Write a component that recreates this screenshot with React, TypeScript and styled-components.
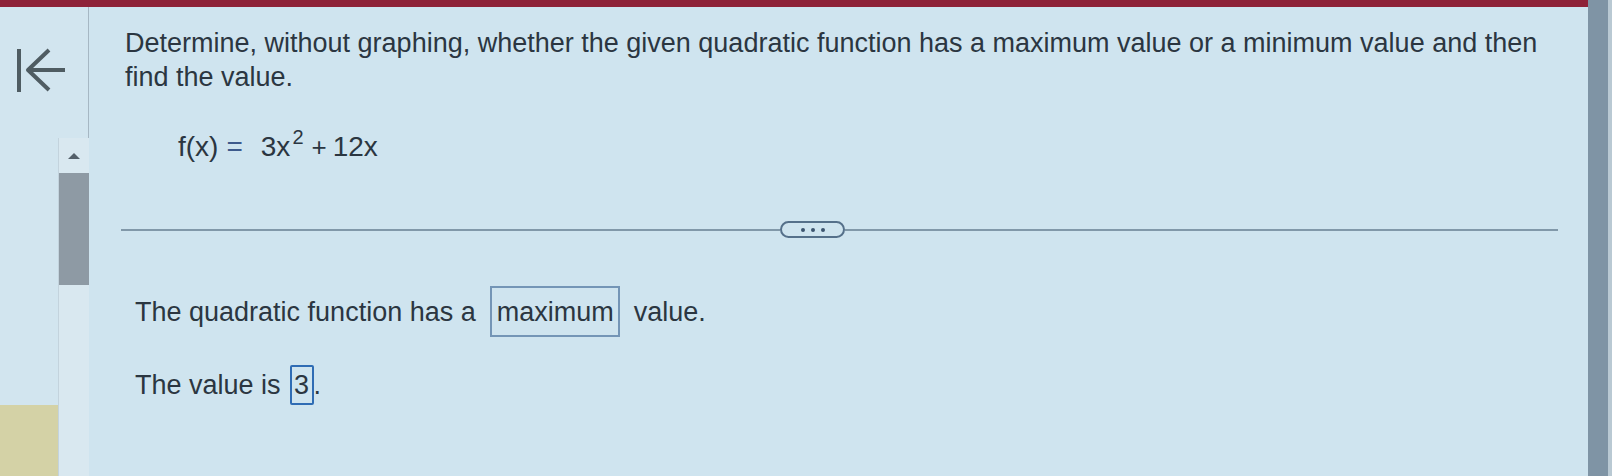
import React from "react";
import styled, { createGlobalStyle } from "styled-components";

const Global = createGlobalStyle`
  html, body { margin: 0; padding: 0; }
  body {
    width: 1612px;
    height: 476px;
    overflow: hidden;
    background: #cfe4ef;
    font-family: "Liberation Sans", Arial, sans-serif;
  }
`;

const Page = styled.div`
  display: flex;
  width: 1612px;
  height: 476px;
  background: #cfe4ef;
`;

const MainColumn = styled.div`
  flex: 1;
  display: flex;
  flex-direction: column;
  min-width: 0;
`;

const RedBar = styled.div`
  height: 7px;
  background: #8e2238;
  flex-shrink: 0;
`;

const Body = styled.div`
  flex: 1;
  display: flex;
  min-height: 0;
`;

const Sidebar = styled.div`
  width: 88px;
  flex-shrink: 0;
  display: flex;
  flex-direction: column;
  border-right: 1px solid #a6b7c3;
  background: #d2e5ef;
`;

const ArrowArea = styled.div`
  height: 131px;
  padding: 40px 0 0 15px;
  box-sizing: border-box;
`;

const SideLower = styled.div`
  flex: 1;
  display: flex;
  align-items: stretch;
`;

const SideLeft = styled.div`
  width: 58px;
  display: flex;
  flex-direction: column;
  justify-content: flex-end;
`;

const YellowPanel = styled.div`
  height: 71px;
  width: 62px;
  background: #d4d2a6;
`;

const Track = styled.div`
  flex: 1;
  display: flex;
  flex-direction: column;
  align-items: center;
  background: #d9e8f0;
  border-left: 1px solid #c3d3dd;
  padding-top: 15px;
`;

const UpArrow = styled.div`
  width: 0;
  height: 0;
  border-left: 6px solid transparent;
  border-right: 6px solid transparent;
  border-bottom: 6px solid #54606a;
`;

const Thumb = styled.div`
  margin-top: 14px;
  width: 30px;
  height: 112px;
  background: #8e9aa4;
`;

const Content = styled.div`
  flex: 1;
  display: flex;
  flex-direction: column;
  padding: 19px 30px 0 36px;
  color: #2b3641;
  font-size: 27px;
  line-height: 34px;
`;

const Prompt = styled.p`
  margin: 0;
`;

const Formula = styled.div`
  margin: 36px 0 0 53px;
  white-space: nowrap;
  font-size: 28px;
`;

const Op = styled.span<{ $l: number; $r: number; $size?: number; $blue?: boolean }>`
  display: inline-block;
  margin-left: ${(p) => p.$l}px;
  margin-right: ${(p) => p.$r}px;
  font-size: ${(p) => p.$size ?? 28}px;
  color: ${(p) => (p.$blue ? "#3d5a8c" : "#2b3641")};
`;

const Sup = styled.sup`
  font-size: 20px;
  line-height: 0;
  vertical-align: 0;
  position: relative;
  top: -12px;
  margin-left: 2px;
`;

const Divider = styled.div`
  margin: 57px 0 0 -4px;
  display: flex;
  align-items: center;
`;

const Rule = styled.div<{ $grow: number }>`
  flex: ${(p) => p.$grow} 1 0;
  height: 2px;
  background: #8198a9;
`;

const Pill = styled.div`
  width: 61px;
  height: 13px;
  border: 2px solid #55708a;
  border-radius: 9px;
  display: flex;
  align-items: center;
  justify-content: center;
  gap: 6px;
`;

const Dot = styled.span`
  width: 4px;
  height: 4px;
  border-radius: 50%;
  background: #3d5570;
`;

const Answers = styled.div`
  display: flex;
  flex-direction: column;
  padding-left: 10px;
  margin-top: 48px;
  gap: 28px;
`;

const AnswerRow = styled.div<{ $h: number }>`
  display: flex;
  align-items: center;
  height: ${(p) => p.$h}px;
  white-space: nowrap;
`;

const SelectBox = styled.div`
  box-sizing: border-box;
  height: 51px;
  width: 130px;
  margin: 0 14px 0 14px;
  padding-left: 5px;
  display: flex;
  align-items: center;
  border: 2px solid #7495b6;
`;

const InputBox = styled.div`
  box-sizing: border-box;
  height: 40px;
  width: 24px;
  margin-left: 9px;
  display: flex;
  align-items: center;
  justify-content: center;
  border: 2px solid #2f6cb4;
  border-radius: 2px;
`;

function BackIcon() {
  return (
    <svg width="52" height="46" viewBox="0 0 52 46" fill="none">
      <line x1="4" y1="2" x2="4" y2="45" stroke="#4f5c62" strokeWidth="4" />
      <polyline
        points="34,3 13,23 34,43"
        stroke="#4f5c62"
        strokeWidth="4"
        strokeLinejoin="round"
        fill="none"
      />
      <line x1="13" y1="23" x2="50" y2="23" stroke="#4f5c62" strokeWidth="4" />
    </svg>
  );
}

const RightEdge = styled.div`
  width: 24px;
  flex-shrink: 0;
  display: flex;
  background: #7f94a5;
`;

const EdgeLight = styled.div`
  margin-left: auto;
  width: 4px;
  background: #b9c9d3;
`;

export default function App() {
  return (
    <>
      <Global />
      <Page>
        <MainColumn>
          <RedBar />
          <Body>
            <Sidebar>
              <ArrowArea>
                <BackIcon />
              </ArrowArea>
              <SideLower>
                <SideLeft>
                  <YellowPanel />
                </SideLeft>
                <Track>
                  <UpArrow />
                  <Thumb />
                </Track>
              </SideLower>
            </Sidebar>
            <Content>
              <Prompt>
                Determine, without graphing, whether the given quadratic function has a
                maximum value or a minimum value and then find the value.
              </Prompt>
              <Formula>
                f(x)
                <Op $l={8} $r={18} $blue>=</Op>
                3x<Sup>2</Sup>
                <Op $l={8} $r={6} $size={26}>+</Op>
                12x
              </Formula>
              <Divider>
                <Rule $grow={643} />
                <Pill>
                  <Dot />
                  <Dot />
                  <Dot />
                </Pill>
                <Rule $grow={695} />
              </Divider>
              <Answers>
                <AnswerRow $h={51}>
                  The quadratic function has a
                  <SelectBox>maximum</SelectBox>
                  value.
                </AnswerRow>
                <AnswerRow $h={40}>
                  The value is
                  <InputBox>3</InputBox>.
                </AnswerRow>
              </Answers>
            </Content>
          </Body>
        </MainColumn>
        <RightEdge>
          <EdgeLight />
        </RightEdge>
      </Page>
    </>
  );
}
